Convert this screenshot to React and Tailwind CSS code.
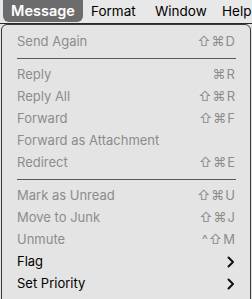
import React from "react";

const font = { fontFamily: "Inter, 'DejaVu Sans', sans-serif" };

function Item({ label, sc, disabled, sub }) {
  return (
    <div className={`flex h-[22px] items-center justify-between pl-[15px] pr-[14px] text-[13px] ${disabled ? "text-[#8c8c8c]" : "text-black"}`}>
      <span>{label}</span>
      {sub ? (
        <svg width="8" height="12" viewBox="0 0 8 12" className="mr-[1px]">
          <path d="M1.5 1.5 L6 6 L1.5 10.5" fill="none" stroke="#111" strokeWidth="2" strokeLinecap="round" strokeLinejoin="round" />
        </svg>
      ) : (
        <span className="tracking-[1px] text-[13px]">{sc}</span>
      )}
    </div>
  );
}

function Sep() {
  return (
    <div className="flex h-[11px] items-center pl-[15px] pr-[14px]">
      <div className="h-px w-full bg-[#5a5a5a]" />
    </div>
  );
}

export default function App() {
  return (
    <div className="relative h-[299px] w-[252px] overflow-hidden bg-[#e4e4e4]" style={font}>
      <div className="flex h-[24px] items-start overflow-hidden bg-[#e8e8e8] border-b border-[#2a2a2a] text-[13.5px] text-black">
        <div className="ml-[3px] flex h-[22px] w-[80px] shrink-0 items-center justify-center rounded-b-[6px] bg-[#6c6c6c] text-[14.5px] font-semibold text-white">
          Message
        </div>
        <span className="ml-[8px] flex h-[22px] w-[64px] shrink-0 items-center">Format</span>
        <span className="flex h-[22px] w-[67px] shrink-0 items-center">Window</span>
        <span className="flex h-[22px] shrink-0 items-center">Help</span>
      </div>
      <div className="absolute left-[1px] top-[24px] w-[250px] h-[290px] rounded-t-[6px] border border-[#3a3a3a] bg-[#e4e4e4] pt-[6px]">
        <Item label="Send Again" sc="⇧⌘D" disabled />
        <Sep />
        <Item label="Reply" sc="⌘R" disabled />
        <Item label="Reply All" sc="⇧⌘R" disabled />
        <Item label="Forward" sc="⇧⌘F" disabled />
        <Item label="Forward as Attachment" sc="" disabled />
        <Item label="Redirect" sc="⇧⌘E" disabled />
        <Sep />
        <Item label="Mark as Unread" sc="⇧⌘U" disabled />
        <Item label="Move to Junk" sc="⇧⌘J" disabled />
        <Item label="Unmute" sc="^⇧M" disabled />
        <Item label="Flag" sub />
        <Item label="Set Priority" sub />
      </div>
    </div>
  );
}
